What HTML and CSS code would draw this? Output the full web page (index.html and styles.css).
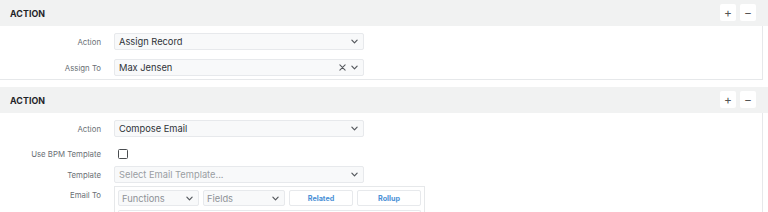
FILE: index.html
```html
<!DOCTYPE html>
<html>
<head>
<meta charset="utf-8">
<link rel="stylesheet" href="styles.css">
</head>
<body>
<div class="section">
  <div class="sec-head">
    <span class="sec-title">ACTION</span>
    <div class="sec-tools">
      <span class="tool">+</span>
      <span class="tool">&minus;</span>
    </div>
  </div>
  <div class="sec-body">
    <div class="row">
      <div class="label">Action</div>
      <div class="select"><span class="val">Assign Record</span><span class="icons"><svg class="chev" viewBox="0 0 8 5" width="7" height="5"><path d="M1 1 L4 4 L7 1" /></svg></span></div>
    </div>
    <div class="row">
      <div class="label">Assign To</div>
      <div class="select"><span class="val">Max Jensen</span><span class="icons"><svg class="x" viewBox="0 0 8 8" width="7" height="7"><path d="M1 1 L7 7 M7 1 L1 7" /></svg><svg class="chev" viewBox="0 0 8 5" width="7" height="5"><path d="M1 1 L4 4 L7 1" /></svg></span></div>
    </div>
  </div>
</div>
<div class="section">
  <div class="sec-head">
    <span class="sec-title">ACTION</span>
    <div class="sec-tools">
      <span class="tool">+</span>
      <span class="tool">&minus;</span>
    </div>
  </div>
  <div class="sec-body">
    <div class="row">
      <div class="label">Action</div>
      <div class="select"><span class="val">Compose Email</span><span class="icons"><svg class="chev" viewBox="0 0 8 5" width="7" height="5"><path d="M1 1 L4 4 L7 1" /></svg></span></div>
    </div>
    <div class="row row-check">
      <div class="label">Use BPM Template</div>
      <span class="checkbox"></span>
    </div>
    <div class="row row-tight">
      <div class="label">Template</div>
      <div class="select"><span class="val ph">Select Email Template...</span><span class="icons"><svg class="chev" viewBox="0 0 8 5" width="7" height="5"><path d="M1 1 L4 4 L7 1" /></svg></span></div>
    </div>
    <div class="row row-top row-email">
      <div class="label label-top">Email To</div>
      <div class="email-box">
        <div class="email-tools">
          <div class="mini-select"><span class="val ph2">Functions</span><svg class="chev" viewBox="0 0 8 5" width="7" height="5"><path d="M1 1 L4 4 L7 1" /></svg></div>
          <div class="mini-select"><span class="val ph2">Fields</span><svg class="chev" viewBox="0 0 8 5" width="7" height="5"><path d="M1 1 L4 4 L7 1" /></svg></div>
          <span class="mini-btn">Related</span>
          <span class="mini-btn">Rollup</span>
        </div>
        <div class="email-input"></div>
      </div>
    </div>
  </div>
</div>
</body>
</html>
```
FILE: styles.css
```css
html, body {
  margin: 0;
  padding: 0;
  background: #ffffff;
  font-family: Inter, "Liberation Sans", sans-serif;
  color: #333;
}
.section {
  margin-bottom: 7px;
}
.section:last-child {
  margin-bottom: 0;
}
.sec-head {
  height: 26px;
  background: #f1f2f2;
  display: flex;
  align-items: center;
  justify-content: space-between;
  padding: 0 12px 0 10px;
}
.sec-title {
  font-size: 8.8px;
  font-weight: 700;
  color: #1f2328;
  letter-spacing: 0.1px;
}
.sec-tools {
  display: flex;
  gap: 4px;
  align-self: flex-start;
  margin-top: 4px;
}
.tool {
  width: 16px;
  height: 17px;
  background: #fff;
  border-radius: 2px;
  display: flex;
  align-items: center;
  justify-content: center;
  font-size: 12px;
  color: #555;
  line-height: 1;
}
.sec-body {
  width: 762px;
  border-right: 1px solid #e6e8ea;
  border-bottom: 1px solid #e6e8ea;
  padding: 7px 0 3px 0;
  display: flex;
  flex-direction: column;
  gap: 9px;
}
.section:last-child .sec-body {
  border-bottom: none;
  padding-bottom: 0;
}
.row {
  display: flex;
  align-items: center;
}
.row-check {
  height: 16px;
}
.row-tight {
  margin-top: -5px;
}
.row-top {
  align-items: flex-start;
}
.row-email {
  margin-top: -6px;
}
.label {
  width: 101px;
  text-align: right;
  font-size: 7.8px;
  color: #6b7076;
  margin-right: 13px;
  flex: none;
}
.label-top {
  padding-top: 4px;
}
.select {
  width: 250px;
  height: 17px;
  box-sizing: border-box;
  background: #f8f9fa;
  border: 1px solid #e7e9ec;
  border-radius: 2px;
  display: flex;
  align-items: center;
  justify-content: space-between;
  padding: 0 5px 0 4px;
}
.val {
  font-size: 9.3px;
  color: #2f3337;
}
.ph {
  color: #9a9ea3;
}
.ph2 {
  color: #8e9297;
}
.icons {
  display: flex;
  align-items: center;
  gap: 5px;
}
.chev path, .x path {
  fill: none;
  stroke: #55595e;
  stroke-width: 1.4;
  stroke-linecap: round;
  stroke-linejoin: round;
}
.x path {
  stroke-width: 1.2;
}
.checkbox {
  width: 8px;
  height: 8px;
  border: 1px solid #4a4d50;
  border-radius: 1.5px;
  margin-left: 4px;
  background: #fff;
}
.email-box {
  width: 311px;
  height: 26px;
  box-sizing: border-box;
  border: 1px solid #e6e8ea;
  border-bottom: none;
  padding: 3px 3px 0 3px;
  overflow: hidden;
}
.email-tools {
  display: flex;
  gap: 4px;
}
.mini-select {
  width: 82px;
  height: 16px;
  box-sizing: border-box;
  background: #f8f9fa;
  border: 1px solid #e7e9ec;
  border-radius: 2px;
  display: flex;
  align-items: center;
  justify-content: space-between;
  padding: 0 5px 0 3px;
}
.mini-select:first-child {
  width: 81px;
}
.mini-btn {
  width: 64px;
  height: 16px;
  box-sizing: border-box;
  background: #fff;
  border: 1px solid #e7e9ec;
  border-radius: 2px;
  display: flex;
  align-items: center;
  justify-content: center;
  font-size: 7.2px;
  font-weight: 700;
  color: #4a90d6;
}
.email-input {
  margin-top: 4px;
  height: 2px;
  border: 1px solid #e7e9ec;
  border-bottom: none;
  border-radius: 2px 2px 0 0;
}
```
